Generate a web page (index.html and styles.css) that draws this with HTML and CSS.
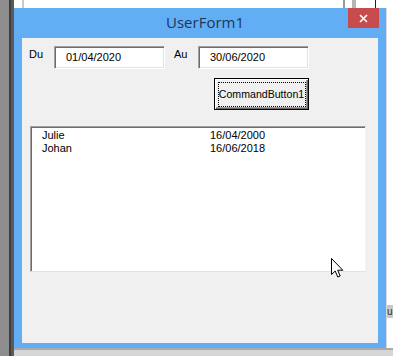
FILE: index.html
```html
<!DOCTYPE html>
<html lang="fr">
<head>
  <meta charset="UTF-8">
  <title>UserForm1</title>
  <link rel="stylesheet" href="styles.css">
</head>
<body>
  <div class="desk">
    <div class="desk-left"></div>
    <div class="desk-edge"></div>
    <div class="desk-top">
      <span class="tl tl-a"></span>
      <span class="tl tl-b"></span>
      <span class="tl tl-c"></span>
      <span class="tl tl-d"></span>
    </div>
    <div class="desk-right">
      <span class="dr-band">u</span>
    </div>
    <div class="desk-bottom"></div>

    <div class="window">
      <div class="titlebar">
        <div class="title">UserForm1</div>
        <div class="close">
          <svg width="9" height="9" viewBox="0 0 9 9"><path d="M1 1 L8 8 M8 1 L1 8" stroke="#fff" stroke-width="1.6"/></svg>
        </div>
      </div>
      <div class="client">
        <div class="row-dates">
          <label class="lbl lbl-du">Du</label>
          <div class="textbox">01/04/2020</div>
          <label class="lbl lbl-au">Au</label>
          <div class="textbox">30/06/2020</div>
        </div>
        <div class="row-btn">
          <button class="cmd">CommandButton1</button>
        </div>
        <div class="listbox">
          <div class="item"><span>Julie</span><span>16/04/2000</span></div>
          <div class="item"><span>Johan</span><span>16/06/2018</span></div>
        </div>
      </div>
    </div>

    <svg class="cursor" width="13" height="20" viewBox="0 0 13 20">
      <path d="M0.5 0.5 L0.5 16.5 L4.2 13 L6.8 19 L9.2 18 L6.7 12.2 L11.8 12.2 Z" fill="#fff" stroke="#000" stroke-width="1" stroke-linejoin="miter"/>
    </svg>
  </div>
</body>
</html>
```

FILE: styles.css
```css
html, body {
  margin: 0; padding: 0;
  width: 393px; height: 356px;
  overflow: hidden;
  font-family: "Liberation Sans", Arial, sans-serif;
  font-size: 11px;
  color: #000;
}
.desk {
  position: relative;
  width: 393px; height: 356px;
  background: #fff;
}
.desk-left {
  position: absolute; left: 0; top: 0;
  width: 9px; height: 356px;
  background: #8d8d8d;
}
.desk-edge {
  position: absolute; left: 9px; top: 0;
  width: 5px; height: 356px;
  background: #5a5a5a;
  border-left: 2px solid #3e3e3e;
  box-sizing: border-box;
}
.desk-top {
  position: absolute; left: 14px; top: 0;
  width: 379px; height: 8px;
  background: #fff;
}
.tl { position: absolute; top: 0; height: 8px; }
.tl-a { left: 8px; width: 2px; background: #c9c9c9; }
.tl-b { left: 329px; width: 2px; background: #9a9a9a; }
.tl-c { left: 338px; width: 4px; background: #b5b5b5; }
.tl-d { left: 361px; width: 1px; background: #222; }
.desk-right {
  position: absolute; left: 386px; top: 8px;
  width: 7px; height: 340px;
  background: #fff;
  border-left: 1px solid #d8d8d8;
  box-sizing: border-box;
}
.dr-band {
  position: absolute; left: 0; top: 297px;
  width: 7px; height: 13px;
  background: #c8c8c8;
  font-size: 10px; line-height: 13px;
  color: #333;
}
.desk-bottom {
  position: absolute; left: 14px; top: 348px;
  width: 379px; height: 8px;
  background: #d6d6d6;
  border-top: 2px solid #a9a9a9;
  box-sizing: border-box;
}

.window {
  position: absolute; left: 14px; top: 8px;
  width: 372px; height: 340px;
  background: #62aef4;
  display: flex; flex-direction: column;
}
.titlebar {
  height: 30px;
  display: flex;
}
.title {
  flex: 1;
  padding-left: 48px;
  text-align: center;
  line-height: 29px;
  font-family: "Open Sans", "Noto Sans", sans-serif;
  font-size: 15px;
  color: #1e3656;
}
.close {
  width: 31px; height: 20px;
  margin-right: 7px;
  background: #c84c4e;
  display: flex; align-items: center; justify-content: center;
}
.client {
  flex: 1;
  margin: 0 8px 5px 8px;
  background: #f0f0f0;
  padding-top: 8px;
}

.row-dates {
  display: flex;
  padding-left: 7px;
}
.lbl {
  padding-top: 2px;
  line-height: 13px;
}
.lbl-du { width: 25px; }
.lbl-au { width: 24px; margin-left: 9px; }
.textbox {
  width: 111px; height: 23px;
  box-sizing: border-box;
  background: #fff;
  border: 1px solid;
  border-color: #a0a0a0 #fff #fff #a0a0a0;
  box-shadow: inset 1px 1px 0 #6d6d6d, inset -1px -1px 0 #e3e3e3;
  padding-left: 11px;
  line-height: 21px;
}

.row-btn {
  padding-left: 192px;
  margin-top: 9px;
}
.cmd {
  position: relative;
  width: 95px; height: 32px;
  margin: 0;
  padding: 0;
  background: #f0f0f0;
  border: 1px solid #000;
  box-shadow: inset 1px 1px 0 #fff, inset -1px -1px 0 #696969, inset -2px -2px 0 #a0a0a0;
  font-family: "Liberation Sans", Arial, sans-serif;
  font-size: 10.6px;
  color: #000;
}
.cmd::after {
  content: "";
  position: absolute;
  left: 3px; top: 3px; right: 2px; bottom: 2px;
  border: 1px dotted #000;
}

.listbox {
  margin: 16px 0 0 8px;
  width: 336px; height: 146px;
  box-sizing: border-box;
  background: #fff;
  border: 1px solid;
  border-color: #a0a0a0 #f4f4f4 #e3e3e3 #a0a0a0;
  box-shadow: inset 1px 1px 0 #6d6d6d;
  padding: 2px 0 0 11px;
}
.item {
  display: grid;
  grid-template-columns: 168px auto;
  line-height: 13px;
}

.cursor {
  position: absolute;
  left: 331px; top: 258px;
}
```
